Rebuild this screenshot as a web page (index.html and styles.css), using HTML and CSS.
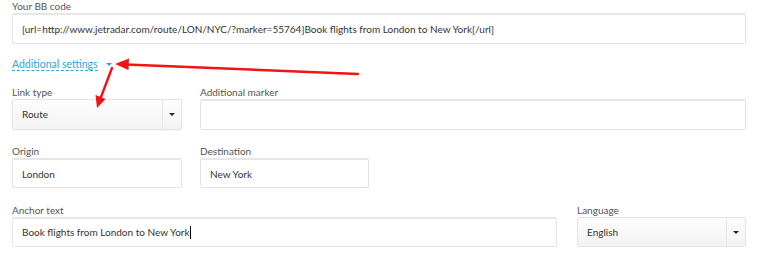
FILE: index.html
```html
<!DOCTYPE html>
<html lang="en">
<head>
  <meta charset="UTF-8">
  <title>BB code settings</title>
  <link rel="stylesheet" href="styles.css">
</head>
<body>
  <div class="form">
    <!-- BB code -->
    <div class="group">
      <label class="label">Your BB code</label>
      <input class="field" type="text" value="[url=http://www.jetradar.com/route/LON/NYC/?marker=55764]Book flights from London to New York[/url]">
    </div>

    <div class="toggle">
      <a class="more" href="#">Additional settings</a>
      <span class="tri"></span>
    </div>

    <div class="row row-type">
      <div class="group">
        <label class="label">Link type</label>
        <div class="select">
          <span class="value">Route</span>
          <span class="btn"><span class="arrow"></span></span>
        </div>
      </div>
      <div class="group">
        <label class="label">Additional marker</label>
        <input class="field" type="text" value="">
      </div>
    </div>

    <div class="row row-places">
      <div class="group">
        <label class="label">Origin</label>
        <input class="field" type="text" value="London">
      </div>
      <div class="group">
        <label class="label">Destination</label>
        <input class="field" type="text" value="New York">
      </div>
    </div>

    <div class="row row-anchor">
      <div class="group">
        <label class="label">Anchor text</label>
        <div class="field fake">Book flights from London to New York<span class="cursor"></span></div>
      </div>
      <div class="group">
        <label class="label">Language</label>
        <div class="select">
          <span class="value">English</span>
          <span class="btn"><span class="arrow"></span></span>
        </div>
      </div>
    </div>
  </div>

  <!-- red annotation arrows -->
  <svg class="marks" width="768" height="268" viewBox="0 0 768 268">
    <line x1="358" y1="74" x2="126" y2="64.5" stroke="#f01414" stroke-width="2.4" stroke-linecap="round"/>
    <polygon points="115,64 129,58.5 128.5,70" fill="#f01414"/>
    <line x1="112" y1="68" x2="101" y2="97" stroke="#f01414" stroke-width="2.4" stroke-linecap="round"/>
    <polygon points="97,108 95.5,95 105.5,99" fill="#f01414"/>
  </svg>
</body>
</html>
```

FILE: styles.css
```css
/* General Styles */
body {
  margin: 0;
  font-family: 'Lato', 'Open Sans', sans-serif;
  font-size: 10px;
  color: #333;
  background: #fff;
}

.form {
  width: 734px;
  padding: 0 12px;
}

.label {
  display: block;
  color: #555;
  font-size: 10px;
  line-height: 13px;
  height: 13px;
}

.field {
  display: block;
  box-sizing: border-box;
  width: 100%;
  height: 31px;
  margin: 0;
  padding: 0 9px;
  border: 1px solid #e4e4e4;
  border-top: 2px solid #e6e6e6;
  border-radius: 2px;
  background: #fff;
  font-family: inherit;
  font-size: 10px;
  color: #333;
  outline: none;
}

.fake {
  line-height: 27px;
}

.cursor {
  display: inline-block;
  width: 1px;
  height: 13px;
  background: #000;
  vertical-align: -3px;
}

/* Additional settings link */
.toggle {
  height: 42px;
  padding-top: 14px;
  box-sizing: border-box;
}

.more {
  color: #2ba6dc;
  text-decoration: none;
  border-bottom: 1px dashed #2ba6dc;
  font-size: 10.5px;
  line-height: 12px;
}

.tri {
  display: inline-block;
  margin-left: 6px;
  width: 0;
  height: 0;
  border-left: 3px solid transparent;
  border-right: 3px solid transparent;
  border-top: 3px solid #2ba6dc;
  vertical-align: 2px;
}

/* Rows */
.row {
  display: grid;
  gap: 18px;
}

.row-type {
  grid-template-columns: 170px 546px;
  margin-bottom: 15px;
}

.row-places {
  grid-template-columns: 170px 169px;
  margin-bottom: 16px;
}

.row-places .field,
.row-anchor .field,
.row-anchor .select {
  height: 30px;
}

.row-anchor {
  grid-template-columns: 545px 169px;
  gap: 20px;
}

/* Select boxes */
.select {
  display: flex;
  box-sizing: border-box;
  height: 31px;
  border: 1px solid #e4e4e4;
  border-radius: 2px;
  background: linear-gradient(#fdfdfd, #f3f3f3);
  box-shadow: 0 1px 1px rgba(0, 0, 0, 0.04);
}

.select .value {
  flex: 1;
  padding-left: 9px;
  line-height: 29px;
  color: #333;
}

.row-anchor .select .value {
  line-height: 28px;
}

.select .btn {
  width: 18px;
  border-left: 1px solid #e6e6e6;
  display: flex;
  align-items: center;
  justify-content: center;
}

.arrow {
  width: 0;
  height: 0;
  border-left: 3px solid transparent;
  border-right: 3px solid transparent;
  border-top: 3px solid #222;
}

.marks {
  position: absolute;
  top: 0;
  left: 0;
  pointer-events: none;
}
```
